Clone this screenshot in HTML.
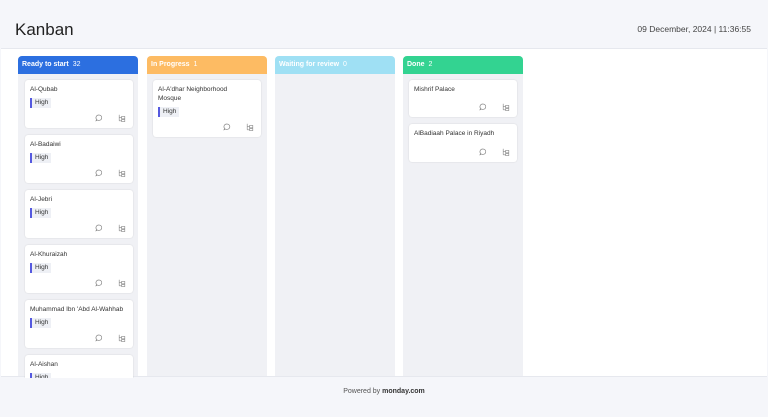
<!DOCTYPE html>
<html><head><style>
*{margin:0;padding:0;box-sizing:border-box}
body{width:768px;height:417px;background:#f5f6fa;font-family:"Liberation Sans",sans-serif;color:#333;position:relative;overflow:hidden}
.title{position:absolute;left:15px;top:20px;font-size:17px;color:#222}
.date{position:absolute;right:17px;top:24px;font-size:8.5px;color:#444}
.panel{position:absolute;left:1px;top:48px;width:766px;height:329px;background:#fff;border-top:1px solid #e6e8ee;border-bottom:1px solid #e6e8ee;overflow:hidden}
.col{position:absolute;top:7px;width:120px;height:330px;background:#f0f1f5;border-radius:4px 4px 0 0}
.hd{height:18px;border-radius:4px 4px 0 0;color:#fff;font-size:7px;font-weight:bold;padding:5px 4px}
.hd span{font-weight:normal;margin-left:4px}
.card{position:absolute;left:7px;width:108px;background:#fff;border-radius:3px;box-shadow:0 0 1.5px rgba(0,0,0,.15);font-size:6.5px;padding:5px 5px;line-height:9px;color:#333}
.tag{display:inline-block;margin-top:4px;background:#eef0f5;border-left:2px solid #5559df;padding:0 3px;line-height:10px;font-size:6.5px}
.ic{position:absolute;bottom:6px;width:8px;height:8px}
.footer{position:absolute;top:388px;left:0;width:768px;text-align:center;font-size:7px;color:#555}
</style></head><body>
<div class="title">Kanban</div>
<div class="date">09 December, 2024 | 11:36:55</div>
<div class="panel">
<div class="col" style="left:17px"><div class="hd" style="background:#2c6fe0">Ready to start<span>32</span></div></div>
<div class="col" style="left:146px"><div class="hd" style="background:#fdbb63">In Progress<span>1</span></div></div>
<div class="col" style="left:274px"><div class="hd" style="background:#9fe0f4">Waiting for review<span>0</span></div></div>
<div class="col" style="left:402px;"><div class="hd" style="background:#33d391">Done<span>2</span></div></div>
</div>
<script>
var svgC='<svg viewBox="0 0 10 10" width="8" height="8"><path d="M5 1.2a3.6 3.4 0 1 1-2 6.3L1.3 8.4l.6-1.8A3.6 3.4 0 0 1 5 1.2z" fill="none" stroke="#888" stroke-width=".9"/></svg>';
var svgS='<svg viewBox="0 0 10 10" width="8" height="8"><path d="M1.5 1v7.5M1.5 4.5h3M1.5 8.5h3M4.5 3h4v3h-4zM4.5 7h4v2.5h-4z" fill="none" stroke="#888" stroke-width=".8"/></svg>';
function card(x,y,h,t,tag){var d=document.createElement('div');d.className='card';d.style.left=x+'px';d.style.top=y+'px';d.style.height=h+'px';
d.innerHTML=t+(tag?'<br><span class="tag">High</span>':'')+'<div class="ic" style="right:30px">'+svgC+'</div><div class="ic" style="right:7px">'+svgS+'</div>';document.body.appendChild(d);}
var n=["Al-Qubab","Al-Badaiwi","Al-Jebri","Al-Khuraizah","Muhammad Ibn 'Abd Al-Wahhab","Al-Aishan"];
n.forEach(function(t,i){card(25,80+55*i,48,t,1)});
card(153,80,57,"Al-A'dhar Neighborhood<br>Mosque",1);
card(409,80,37,"Mishrif Palace",0);
card(409,124,38,"AlBadiaah Palace in Riyadh",0);
</script>
<div style="position:absolute;left:0;top:378px;width:768px;height:39px;background:#f5f6fa"></div>
<div class="footer">Powered by <b style="color:#333">monday.com</b></div>
</body></html>
